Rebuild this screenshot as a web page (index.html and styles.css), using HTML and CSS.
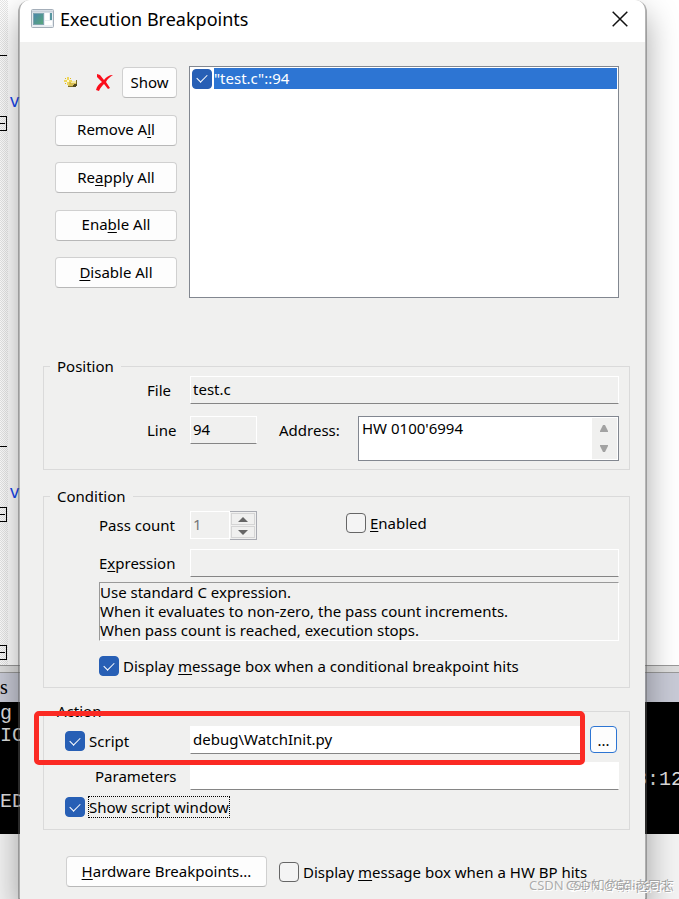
FILE: index.html
```html
<!DOCTYPE html>
<html lang="en">
<head>
<meta charset="utf-8">
<title>Execution Breakpoints</title>
<link rel="stylesheet" href="styles.css">
</head>
<body>
<div class="desktop">
  <div class="backdrop">
    <div class="editor">
      <svg class="folds" width="20" height="665" viewBox="0 0 20 665" aria-hidden="true">
        <g fill="none" stroke="#000" shape-rendering="crispEdges">
          <path d="M0 55.5H7M-7 116.5H6.5V130.5H-7M0 123.5H5"/>
          <path d="M0 446.5H7M-7 507.5H6.5V521.5H-7M0 514.5H5"/>
          <path d="M-7 645.5H6.5V659.5H-7M0 652.5H5"/>
        </g>
        <text class="keyword" x="10" y="107">v</text>
        <text class="keyword" x="10" y="498">v</text>
      </svg>
    </div>
    <div class="splitter"></div>
    <div class="tabs">s</div>
    <div class="console">
      <div class="log"><span>g</span><span>IC</span><span></span><span></span><span>ED</span></div>
      <div class="clock">3:12</div>
    </div>
  </div>

  <main class="dialog">
    <header class="titlebar">
      <svg width="23" height="20" viewBox="0 0 23 20" aria-hidden="true">
        <defs><linearGradient id="pane" x1="0" y1="0" x2="1" y2="1"><stop offset="0" stop-color="#4b86ad"/><stop offset="1" stop-color="#58a878"/></linearGradient></defs>
        <rect x=".5" y=".5" width="22" height="18" rx="1" fill="#e8edf1" stroke="#a4aeb9"/>
        <path d="M1 2.5H22" stroke="#c9d1da" stroke-width="2"/>
        <rect x="2.500" y="4.500" width="10" height="11" fill="url(#pane)" stroke="#7fa5b0"/>
        <rect x="14" y="4" width="4" height="7" fill="#fff"/><rect x="14" y="12" width="7" height="4" fill="#fff"/>
        <rect x="19" y="4" width="2" height="7" fill="#5796a0"/>
      </svg>
      <h1>Execution Breakpoints</h1>
      <button class="close" type="button" aria-label="Close"><svg width="16" height="16" viewBox="0 0 16 16"><path d="M.7.7 15.300 15.300M15.300.7.7 15.300" stroke="#111" stroke-width="1.500"/></svg></button>
    </header>

    <form class="content">
      <section class="top">
        <div class="actions">
          <div class="tools">
            <button class="icon" type="button" aria-label="New breakpoint"><svg width="14" height="14" viewBox="0 0 14 14" shape-rendering="crispEdges">
              <path d="M4 5H13V9L11 11H4Z" fill="#d6bd55"/><path d="M7 5H12V7H7Z" fill="#f5e9a0"/><path d="M4 10.500H10.500M12.500 4V8" fill="none" stroke="#7d6d25"/><path d="M13 8V9L11 11H9V9L11 8Z" fill="#51491f"/>
              <path d="M4 1V9M0 5H8" stroke="#efd75c" stroke-width="2"/><path d="M1 2H2V3H1ZM6 2H7V3H6ZM1 7H2V8H1ZM6 7H7V8H6Z" fill="#e0b920"/><rect x="3" y="4" width="2" height="2" fill="#fffbd0"/></svg></button>
            <button class="icon" type="button" aria-label="Delete breakpoint"><svg width="17" height="17" viewBox="0 0 17 17"><path d="M1 0 4 1 8 6C10 3 13 1 17 1 14 3 11 5 10 8L14 14 12 15 8 10C6 12 4 14 3 17L0 16C1 12 3 10 6 8L1 3Z" fill="#fb0d1b"/></svg></button>
            <button class="btn show" type="button">Show</button>
          </div>
          <button class="btn" type="button">Remove A<u>l</u>l</button>
          <button class="btn" type="button">Re<u>a</u>pply All</button>
          <button class="btn" type="button">Ena<u>b</u>le All</button>
          <button class="btn" type="button"><u>D</u>isable All</button>
        </div>
        <div class="list">
          <label class="item"><input type="checkbox" checked><span>"test.c"::94</span></label>
        </div>
      </section>

      <fieldset class="position">
        <legend>Position</legend>
        <div class="row">
          <label class="indent" for="file">File</label>
          <input class="field" id="file" type="text" value="test.c" readonly>
        </div>
        <div class="row">
          <label class="indent" for="line">Line</label>
          <input class="field short" id="line" type="text" value="94" readonly>
          <label class="address-label" for="address">Address:</label>
          <div class="address">
            <textarea id="address" readonly>HW 0100'6994</textarea>
            <div class="scroll" aria-hidden="true">
              <svg width="8" height="7" viewBox="0 0 8 7"><path d="M0 6 3 0H5L8 6V7H0Z"/></svg>
              <svg width="8" height="7" viewBox="0 0 8 7"><path d="M0 1 3 7H5L8 1V0H0Z"/></svg>
            </div>
          </div>
        </div>
      </fieldset>

      <fieldset class="condition">
        <legend>Condition</legend>
        <div class="row pass">
          <label for="count">Pass count</label>
          <div class="spin">
            <input class="field" id="count" type="text" value="1" disabled>
            <div class="steps">
              <button type="button" disabled aria-label="Increase"><svg width="10" height="5" viewBox="0 0 10 5"><path d="M0 5 5 0 10 5Z"/></svg></button>
              <button type="button" disabled aria-label="Decrease"><svg width="10" height="5" viewBox="0 0 10 5"><path d="M0 0 5 5 10 0Z"/></svg></button>
            </div>
          </div>
          <label class="check enabled"><input type="checkbox"><span><u>E</u>nabled</span></label>
        </div>
        <div class="row">
          <label for="expression">E<u>x</u>pression</label>
          <input class="field" id="expression" type="text" readonly>
        </div>
        <p class="help">Use standard C expression.<br>When it evaluates to non-zero, the pass count increments.<br>When pass count is reached, execution stops.</p>
        <label class="check message"><input type="checkbox" checked><span>Display <u>m</u>essage box when a conditional breakpoint hits</span></label>
      </fieldset>

      <fieldset class="action">
        <legend>Action</legend>
        <div class="row script">
          <label class="check"><input type="checkbox" checked><span>Script</span></label>
          <input class="field" type="text" value="debug\WatchInit.py" aria-label="Script file">
          <button class="browse" type="button" aria-label="Browse">...</button>
          <div class="highlight"></div>
        </div>
        <div class="row">
          <label for="parameters">Parameters</label>
          <input class="field" id="parameters" type="text">
        </div>
        <label class="check window"><input type="checkbox" checked><span>Show script window</span></label>
      </fieldset>

      <footer>
        <button class="btn" type="button"><u>H</u>ardware Breakpoints...</button>
        <label class="check"><input type="checkbox"><span>Display <u>m</u>essage box when a HW BP hits</span></label>
      </footer>
    </form>
  </main>
  <div class="watermark">CSDN @中知华解-老同志</div>
  <div class="watermark second">CSDN @Eclipser.k</div>
</div>
</body>
</html>
```
FILE: styles.css
```css
* { box-sizing: border-box; }
body {
  margin: 0;
  overflow: hidden;
  font: 15px/20px "Noto Sans", "Noto Sans CJK SC", sans-serif;
  color: #000;
}
button, input, textarea { font: inherit; color: inherit; margin: 0; }
u { text-underline-offset: 2px; text-decoration-thickness: 1px; text-decoration-skip-ink: none; }

.desktop { position: relative; display: grid; min-height: 100vh; }
.backdrop, .dialog { grid-area: 1 / 1; }

.backdrop { display: flex; flex-direction: column; background: #f3f3f3; min-width: 0; }
.editor {
  height: 665px;
  background: linear-gradient(#fff, #fff) 8px 0 no-repeat,
    repeating-conic-gradient(#fff 0 25%, #e6e6e6 0 50%) 0 0 / 2px 2px;
}
.folds { display: block; }
.keyword { font: 18px "Noto Sans", sans-serif; fill: #1748f0; }
.splitter { height: 8px; background: #dedede; border-top: 1px solid #999; border-bottom: 1px solid #999; }
.tabs { height: 29px; background: #c8cad6; font: 20px/29px "Liberation Serif", serif; }
.console {
  display: flex;
  justify-content: space-between;
  height: 132px;
  background: #000;
  color: #ddd;
  font: 20px/22px "Liberation Mono", monospace;
}
.log { display: grid; grid-template-rows: repeat(5, 22px); width: 30px; padding-top: 1px; }
.log span { white-space: nowrap; }
.clock { align-self: flex-end; width: 44px; padding-bottom: 43px; }

.dialog {
  display: flex;
  flex-direction: column;
  margin: 0 32px 0 18px;
  border: solid rgba(90, 90, 90, .45);
  border-width: 0 2px;
  border-radius: 12px 12px 0 0;
  background: #f0f0ef;
  background-clip: padding-box;
  box-shadow: 0 14px 32px rgba(0, 0, 0, .35);
  z-index: 1;
  min-width: 0;
}
.titlebar {
  display: flex;
  align-items: center;
  gap: 6px;
  height: 42px;
  padding: 0 17px 4px 11px;
  background: #fff;
  border-radius: 10px 10px 0 0;
}
h1 { flex: 1; margin: 0; font: 18px/24px "Noto Sans", sans-serif; }
.close, .icon { display: grid; padding: 0; border: 0; background: none; }

.content { padding: 24px 15px 10px 23px; }
.top { display: flex; gap: 12px; height: 232px; margin: 0 11px 58px 12px; }
.actions { display: flex; flex-direction: column; justify-content: space-between; width: 122px; padding: 1px 0 10px; }
.tools { display: flex; align-items: center; justify-content: space-between; padding-left: 9px; }
.tools .icon + .icon { margin-left: 9px; }
.btn {
  height: 31px;
  padding: 0 4px 2px;
  border: 1px solid #d0d0d0;
  border-bottom-color: #b8b8b8;
  border-radius: 4px;
  background: #fdfdfd;
}
.show { width: 55px; }
.list { flex: 1; padding: 1px; border: 1px solid #828790; background: #fff; }
.item { display: flex; align-items: center; gap: 2px; padding-left: 1px; }
.item span { flex: 1; line-height: 21px; background: #2d75d3; color: #fff; }

input[type="checkbox"] {
  appearance: none;
  display: grid;
  place-items: center;
  flex: none;
  width: 20px;
  height: 20px;
  border: 1px solid #666;
  border-radius: 4px;
  background: #f4f4f4;
}
input[type="checkbox"]:checked { border-color: #275fb5; background: #275fb5; }
input[type="checkbox"]:checked::after {
  content: "";
  width: 5px;
  height: 9px;
  margin-top: -3px;
  border: solid #fff;
  border-width: 0 1px 1px 0;
  transform: rotate(45deg);
}
.check { display: flex; align-items: center; gap: 4px; white-space: nowrap; }

fieldset { min-width: 0; margin: 0 0 16px; padding: 0 10px 8px; border: 1px solid #dadada; }
legend { margin-left: -4px; padding: 0 7px; line-height: 20px; }
.row { display: flex; align-items: flex-start; }
.row > label:first-child { flex: none; width: 136px; padding-left: 45px; line-height: 28px; }
.row > label.indent { padding-left: 93px; }
.field {
  flex: 1;
  min-width: 0;
  height: 28px;
  padding: 0 2px 3px;
  border: 1px solid #fff;
  border-bottom-color: #858585;
  outline: 0;
  background: #fff;
}
.field:read-only, .field:disabled { background: #f0f0ef; }
.field:disabled { color: #777; border-bottom-color: #fff; }

.position .row + .row { margin-top: 12px; }
.short { flex: none; width: 67px; }
.address-label { width: 101px; padding-left: 22px; line-height: 28px; }
.address { display: flex; flex: 1; min-width: 0; height: 45px; padding: 1px; border: 1px solid #828790; background: #fff; }
textarea { flex: 1; min-width: 0; padding: 0 2px; border: 0; outline: 0; resize: none; background: none; overflow: hidden; }
.scroll { display: flex; flex-direction: column; align-items: center; justify-content: space-between; width: 25px; padding: 7px 1px 7px 0; background: #f0f0ef; fill: #a2a2a2; }

.condition .row { margin-bottom: 9px; }
.condition .pass { margin-top: 5px; }
.spin { display: flex; width: 67px; height: 29px; }
.steps { display: grid; width: 27px; padding: 1px; border: 1px solid #a9abb2; border-left: 0; gap: 1px; }
.steps button { display: grid; place-items: center; padding: 0; border: 1px solid #d5d5d5; background: #f0f0ef; fill: #666; }
.enabled { margin: 2px 0 0 89px; }
.help { margin: -4px 0 15px 45px; border: 1px solid #fff; border-top-color: #999; border-left-color: #999; line-height: 19px; }
.message { margin-left: 45px; padding-bottom: 3px; }
.condition { margin-bottom: 13px; }

.action .script { position: relative; margin: 5px 0 8px; }
.action .row > .check { width: 136px; padding: 5px 0 0 11px; line-height: 20px; }
.action .row > label:not(.check) { padding-left: 41px; }
.browse { width: 27px; height: 27px; margin: 0 2px 0 9px; padding: 0; border: 1px solid #2d75d3; border-radius: 4px; background: #fdfdfd; }
.highlight { position: absolute; inset: -15px 34px -11px -20px; border: 5px solid #fb2a23; border-radius: 5px; pointer-events: none; }
.window { margin: 7px 0 4px 11px; }
.window span { outline: 1px dotted #000; }

footer { display: flex; align-items: center; gap: 12px; margin: 26px 0 0 23px; }
footer .btn { width: 201px; }

.watermark {
  position: absolute;
  right: 5px;
  bottom: 4px;
  z-index: 2;
  color: rgba(140, 140, 140, .7);
  text-shadow: 1px 1px #fff;
  font: 13px/20px "Noto Sans", "Noto Sans CJK SC", sans-serif;
}
.second { right: 8px; }
```
